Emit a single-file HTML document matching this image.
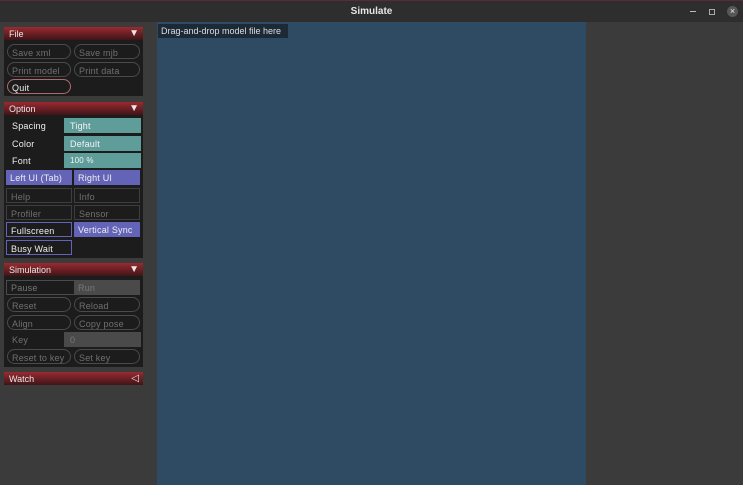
<!DOCTYPE html>
<html><head><style>
*{box-sizing:border-box;margin:0;padding:0}
body{width:743px;height:485px;background:#3b3b3b;font-family:"Liberation Sans",sans-serif;font-size:9px;color:#ddd;position:relative;overflow:hidden}
#tb{position:absolute;left:0;top:0;width:743px;height:22px;background:#2e2e2e;border-top:1px solid #5a2a35}
#tb .t{position:absolute;left:0;width:743px;top:5px;text-align:center;font-weight:bold;font-size:10px;color:#e6e6e6}
#cv{position:absolute;left:157px;top:22px;width:429px;height:463px;background:#2f4a63}
#tip{position:absolute;left:158px;top:24px;width:130px;height:14px;background:#1c2a38;color:#ddd;padding:2px 3px;font-size:9px;white-space:nowrap}
.p{position:absolute;left:4px;width:139px;background:#1c1c1c}
.h{position:absolute;left:4px;width:139px;height:13px;background:linear-gradient(#9a2a30,#3e1518);color:#e8e8e8;padding:2px 5px;font-size:9px}
.h span{position:absolute;right:4px;top:1px;font-size:10px}
.b{position:absolute;height:15px;font-size:9px;padding:3px 4px 0;white-space:nowrap;letter-spacing:0.2px}
.r{border:1px solid #4a4a4a;border-radius:8px;color:#707070}
.sq{border:1px solid #3e3e3e;color:#707070}
.teal{background:#5f9d9b;color:#f4f4f4;padding-left:6px}
.pur{background:#6363b8;color:#eee}
.pb{border:1px solid #6363b8;color:#eee}
.lab{color:#eee;padding-left:7px}
.gr{background:#4a4a4a;color:#777}
</style></head><body>
<div id="tb"><div class="t">Simulate</div>
<div style="position:absolute;left:690px;top:10px;width:6px;height:1px;background:#bbb"></div>
<div style="position:absolute;left:709px;top:8px;width:6px;height:6px;border:1px solid #aaa"></div>
<div style="position:absolute;left:727px;top:5px;width:11px;height:11px;border-radius:50%;background:#575757;color:#eee;font-size:9px;line-height:11px;text-align:center">×</div>
</div>
<div id="cv"></div>
<div id="tip">Drag-and-drop model file here</div>

<div class="h" style="top:27px">File<span>▼</span></div>
<div class="p" style="top:40px;height:56px"></div>
<div class="b r" style="left:7px;top:44px;width:64px">Save xml</div>
<div class="b r" style="left:74px;top:44px;width:66px">Save mjb</div>
<div class="b r" style="left:7px;top:62px;width:64px">Print model</div>
<div class="b r" style="left:74px;top:62px;width:66px">Print data</div>
<div class="b r" style="left:7px;top:79px;width:64px;border-color:#b06a6a;color:#eee">Quit</div>

<div class="h" style="top:102px">Option<span>▼</span></div>
<div class="p" style="top:115px;height:143px"></div>
<div class="b lab" style="left:5px;top:118px">Spacing</div>
<div class="b teal" style="left:64px;top:118px;width:77px">Tight</div>
<div class="b lab" style="left:5px;top:136px">Color</div>
<div class="b teal" style="left:64px;top:136px;width:77px">Default</div>
<div class="b lab" style="left:5px;top:153px">Font</div>
<div class="b teal" style="left:64px;top:153px;width:77px;font-size:8px">100 %</div>
<div class="b pur" style="left:6px;top:170px;width:66px">Left UI (Tab)</div>
<div class="b pur" style="left:74px;top:170px;width:66px">Right UI</div>
<div class="b sq" style="left:6px;top:188px;width:66px">Help</div>
<div class="b sq" style="left:74px;top:188px;width:66px">Info</div>
<div class="b sq" style="left:6px;top:205px;width:66px">Profiler</div>
<div class="b sq" style="left:74px;top:205px;width:66px">Sensor</div>
<div class="b pb" style="left:6px;top:222px;width:66px">Fullscreen</div>
<div class="b pur" style="left:74px;top:222px;width:66px">Vertical Sync</div>
<div class="b pb" style="left:6px;top:240px;width:66px">Busy Wait</div>

<div class="h" style="top:263px">Simulation<span>▼</span></div>
<div class="p" style="top:276px;height:91px"></div>
<div class="b" style="left:6px;top:280px;width:134px;border:1px solid #4a4a4a"></div>
<div class="b" style="left:7px;top:280px;width:66px;color:#777">Pause</div>
<div class="b gr" style="left:74px;top:280px;width:66px">Run</div>
<div class="b r" style="left:7px;top:297px;width:64px">Reset</div>
<div class="b r" style="left:74px;top:297px;width:66px">Reload</div>
<div class="b r" style="left:7px;top:315px;width:64px">Align</div>
<div class="b r" style="left:74px;top:315px;width:66px">Copy pose</div>
<div class="b" style="left:7px;top:332px;color:#707070;padding-left:5px">Key</div>
<div class="b gr" style="left:64px;top:332px;width:77px;padding-left:6px">0</div>
<div class="b r" style="left:7px;top:349px;width:64px">Reset to key</div>
<div class="b r" style="left:74px;top:349px;width:66px">Set key</div>

<div class="h" style="top:372px">Watch<span>◁</span></div>
</body></html>
